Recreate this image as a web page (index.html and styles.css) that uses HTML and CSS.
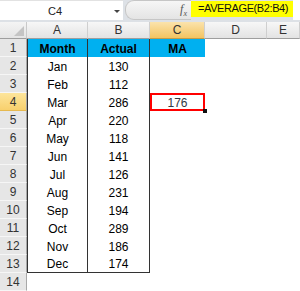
FILE: index.html
```html
<!DOCTYPE html>
<html lang="en">
<head>
  <meta charset="UTF-8">
  <meta name="viewport" content="width=device-width,initial-scale=1">
  <title>Moving average</title>
  <link rel="stylesheet" href="styles.css">
</head>
<body>

  <div class="fbar">
    <div class="namebox"><span class="ref">C4</span><span class="drop"></span></div>
    <div class="pill"><span class="fx">f<sub>x</sub></span></div>
    <div class="formula">=AVERAGE(B2:B4)</div>
  </div>

  <div class="sheet">
    <div class="corner"></div>
    <div class="col">A</div><div class="col">B</div><div class="col sel">C</div><div class="col">D</div><div class="col">E</div>

    <div class="rh">1</div><div class="cell a head">Month</div><div class="cell b head">Actual</div><div class="cell head">MA</div><div class="cell"></div><div class="cell"></div>
    <div class="rh">2</div><div class="cell a">Jan</div><div class="cell b">130</div><div class="cell"></div><div class="cell"></div><div class="cell"></div>
    <div class="rh">3</div><div class="cell a">Feb</div><div class="cell b">112</div><div class="cell"></div><div class="cell"></div><div class="cell"></div>
    <div class="rh sel">4</div><div class="cell a">Mar</div><div class="cell b">286</div><div class="cell active">176</div><div class="cell"></div><div class="cell"></div>
    <div class="rh">5</div><div class="cell a">Apr</div><div class="cell b">220</div><div class="cell"></div><div class="cell"></div><div class="cell"></div>
    <div class="rh">6</div><div class="cell a">May</div><div class="cell b">118</div><div class="cell"></div><div class="cell"></div><div class="cell"></div>
    <div class="rh">7</div><div class="cell a">Jun</div><div class="cell b">141</div><div class="cell"></div><div class="cell"></div><div class="cell"></div>
    <div class="rh">8</div><div class="cell a">Jul</div><div class="cell b">126</div><div class="cell"></div><div class="cell"></div><div class="cell"></div>
    <div class="rh">9</div><div class="cell a">Aug</div><div class="cell b">231</div><div class="cell"></div><div class="cell"></div><div class="cell"></div>
    <div class="rh">10</div><div class="cell a">Sep</div><div class="cell b">194</div><div class="cell"></div><div class="cell"></div><div class="cell"></div>
    <div class="rh">11</div><div class="cell a">Oct</div><div class="cell b">289</div><div class="cell"></div><div class="cell"></div><div class="cell"></div>
    <div class="rh">12</div><div class="cell a">Nov</div><div class="cell b">186</div><div class="cell"></div><div class="cell"></div><div class="cell"></div>
    <div class="rh">13</div><div class="cell a last">Dec</div><div class="cell b last">174</div><div class="cell"></div><div class="cell"></div><div class="cell"></div>
    <div class="rh">14</div><div class="cell"></div><div class="cell"></div><div class="cell"></div><div class="cell"></div><div class="cell"></div>
  </div>

</body>
</html>
```

FILE: styles.css
```css
*, *::before, *::after { box-sizing: border-box; }
body {
  margin: 0;
  width: 300px;
  height: 291px;
  overflow: hidden;
  background: #fff;
  font-family: 'Liberation Sans', Arial, sans-serif;
  font-size: 12px;
  color: #000;
}

/* formula bar */
.fbar {
  display: flex;
  height: 22px;
  padding-bottom: 2px;
  background: #dde1e6;
}
.namebox {
  position: relative;
  width: 123px;
  background: #fff;
  border-top: 1px solid #e2e2e2;
  display: flex;
  align-items: center;
  justify-content: center;
  padding-right: 13px;
  font-size: 11px;
  color: #222;
}
.drop {
  position: absolute;
  right: 3px;
  top: 9px;
  border-left: 3px solid transparent;
  border-right: 3px solid transparent;
  border-top: 3px solid #444;
}
.pill {
  width: 66px;
  margin-left: 2px;
  background: linear-gradient(#f6f6f6, #e4e4e4);
  border: 1px solid #c6c6c6;
  border-right: none;
  border-radius: 9px 0 0 9px;
  display: flex;
  align-items: center;
  justify-content: flex-end;
  padding-right: 4px;
}
.fx {
  font-family: 'Liberation Serif', serif;
  font-style: italic;
  font-size: 12px;
  color: #555;
}
.fx sub { font-size: 8px; }
.formula {
  width: 102px;
  margin-top: 1px;
  margin-bottom: 3px;
  background: #ffff00;
  padding-left: 7px;
  font-size: 11px;
  letter-spacing: -0.4px;
  line-height: 15px;
  color: #111;
}
.fbar::after {
  content: '';
  flex: 1;
  background: #fff;
}

/* grid */
.sheet {
  display: grid;
  grid-template-columns: 27px 61px 62px 55px 62px 1fr;
  grid-template-rows: 17px repeat(14, 18px);
}
.corner {
  position: relative;
  background: linear-gradient(#f4f4f4, #e4e4e4);
  border-right: 1px solid #c9c9c9;
  border-bottom: 1px solid #9e9e9e;
}
.corner::after {
  content: '';
  position: absolute;
  right: 2px;
  bottom: 2px;
  border-left: 10px solid transparent;
  border-bottom: 10px solid #c4c4c4;
}
.col {
  display: flex;
  align-items: center;
  justify-content: center;
  background: linear-gradient(#f7f7f7, #e3e3e3);
  border-right: 1px solid #cfcfcf;
  border-bottom: 1px solid #9e9e9e;
  color: #333;
  font-size: 12px;
}
.col.sel {
  background: linear-gradient(#fbe3ac, #f3c461);
  border-bottom-color: #c29b4a;
}
.rh {
  display: flex;
  align-items: center;
  justify-content: center;
  background: #e6e6e6;
  border-bottom: 1px solid #f6f6f6;
  border-right: 1px solid #a8a8a8;
  color: #333;
  font-size: 12px;
}
.rh.sel {
  background: linear-gradient(#fde59b, #f8d06d);
  border-bottom-color: #e6b94f;
}

.cell {
  display: flex;
  align-items: center;
  justify-content: center;
  padding-top: 1px;
}
.cell.a { border-left: 1px solid #333; border-right: 1px solid #333; }
.cell.b { border-right: 1px solid #333; }
.cell.last { border-bottom: 1px solid #333; }
.cell.head {
  background: #00b0f0;
  font-weight: bold;
}
.cell.active {
  position: relative;
  outline: 2px solid #ff0000;
  outline-offset: -2px;
  color: #333a44;
}
.cell.active::after {
  content: '';
  position: absolute;
  right: -2px;
  bottom: -2px;
  width: 4px;
  height: 4px;
  background: #111;
}
```
